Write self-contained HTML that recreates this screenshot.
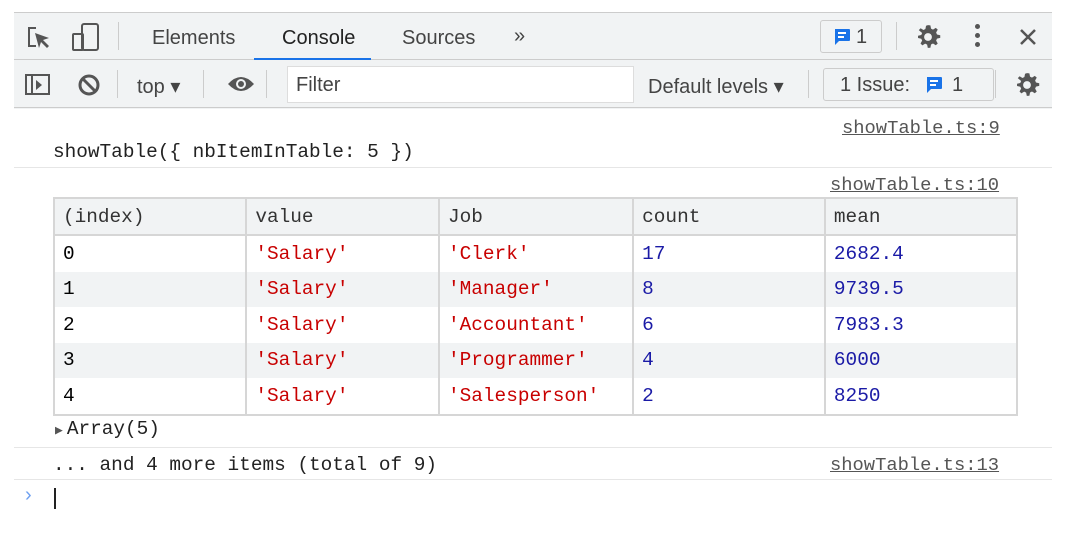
<!DOCTYPE html><html><head><style>
body{margin:0;width:1077px;height:537px;background:#fff;position:relative;overflow:hidden;font-family:"Liberation Sans",sans-serif}
.a{position:absolute}
.m{font-family:"Liberation Mono",monospace;font-size:19.4px;color:#222;white-space:pre}
.ui{font-size:20px;color:#444;white-space:pre}
.link{font-family:"Liberation Mono",monospace;font-size:18.8px;color:#555;text-decoration:underline;white-space:pre}
table{border-collapse:collapse;position:absolute;left:53px;top:197px;width:965px;font-family:"Liberation Mono",monospace;font-size:19.4px}
td{border:2px solid #d6d6d6;border-top:none;border-bottom:none;height:35.5px;padding:0 0 0 8px;width:185px;white-space:pre}
tr.h td{background:#f1f3f4;border-top:2px solid #d6d6d6;border-bottom:2px solid #d6d6d6;color:#333;height:35px}
tr.g td{background:#f1f3f4}
tr.l td{border-bottom:2px solid #d6d6d6}
.s{color:#c80000}.n{color:#1a1aa6}
.sep{position:absolute;width:1px;background:#ccc}
</style></head><body>
<svg width="0" height="0" style="position:absolute"><defs><g id="gear"><path d="M12 1l2.2.3.6 3 1.8.9 2.6-1.6 1.8 1.6-1.5 2.7.8 1.8 3 .7v2.4l-3 .7-.8 1.8 1.5 2.7-1.8 1.6-2.6-1.6-1.8.9-.6 3-2.4.1-.6-3-1.8-.9-2.6 1.6-1.7-1.7 1.5-2.6-.8-1.8-3-.7V10.8l3-.7.8-1.8L3.5 5.6 5.2 3.9l2.6 1.6 1.8-.9.6-3z" fill="#555"/><circle cx="12" cy="12" r="3.6" fill="#f1f3f4"/></g></defs></svg>
<div class="a" style="left:14px;top:12px;width:1038px;height:96px;background:#f1f3f4;border-top:1px solid #ccc"></div>
<div class="a" style="left:14px;top:59px;width:1038px;height:1px;background:#ccc"></div>
<div class="a" style="left:14px;top:107px;width:1038px;height:1px;background:#ccc"></div>
<svg class="a" style="left:26px;top:24px" width="28" height="28" viewBox="0 0 28 28"><path d="M10 4H3v18h7" fill="none" stroke="#555" stroke-width="2"/><path d="M9 9l14 5-6 2 6 6-2 2-6-6-2 6z" fill="#555"/></svg>
<svg class="a" style="left:70px;top:22px" width="32" height="30" viewBox="0 0 32 30"><rect x="12" y="2" width="16" height="26" rx="2" fill="none" stroke="#555" stroke-width="2"/><rect x="3" y="12" width="10" height="16" rx="1" fill="none" stroke="#555" stroke-width="2"/></svg>
<div class="sep" style="left:118px;top:22px;height:28px"></div>
<div class="a ui" style="left:152px;top:27px">Elements</div>
<div class="a ui" style="left:282px;top:27px;color:#222">Console</div>
<div class="a" style="left:254px;top:58px;width:117px;height:2px;background:#1a73e8"></div>
<div class="a ui" style="left:402px;top:27px">Sources</div>
<div class="a ui" style="left:514px;top:25px">»</div>
<div class="a" style="left:820px;top:20px;width:60px;height:31px;border:1px solid #ccc;border-radius:3px"></div>
<svg class="a" style="left:832px;top:27px" width="20" height="20" viewBox="0 0 20 20"><path d="M3 2h14a1 1 0 011 1v10a1 1 0 01-1 1H7l-4 4z" fill="#1a73e8"/><path d="M6 6h8M6 10h6" stroke="#fff" stroke-width="2"/></svg>
<div class="a ui" style="left:856px;top:26px">1</div>
<div class="sep" style="left:896px;top:22px;height:28px"></div>
<svg class="a" style="left:915px;top:24px" width="26" height="26" viewBox="0 0 24 24"><use href="#gear"/></svg>
<div class="a" style="left:975px;top:24px;width:6px">
<div style="width:5px;height:5px;border-radius:50%;background:#555;margin-bottom:4px"></div><div style="width:5px;height:5px;border-radius:50%;background:#555;margin-bottom:4px"></div><div style="width:5px;height:5px;border-radius:50%;background:#555"></div></div>
<svg class="a" style="left:1018px;top:27px" width="20" height="20"><path d="M3 3l14 14M17 3L3 17" stroke="#555" stroke-width="2.5"/></svg>
<svg class="a" style="left:24px;top:72px" width="28" height="26"><rect x="2" y="3" width="23" height="19" fill="none" stroke="#555" stroke-width="2"/><path d="M8 3v19" stroke="#555" stroke-width="2"/><path d="M12 8l6 5-6 5z" fill="#555"/></svg>
<svg class="a" style="left:77px;top:73px" width="24" height="24"><circle cx="12" cy="12" r="9" fill="none" stroke="#555" stroke-width="3"/><path d="M6 6l12 12" stroke="#555" stroke-width="3"/></svg>
<div class="sep" style="left:117px;top:70px;height:28px"></div>
<div class="a ui" style="left:137px;top:74px">top ▾</div>
<div class="sep" style="left:203px;top:70px;height:28px"></div>
<svg class="a" style="left:226px;top:74px" width="30" height="20"><path d="M2 10Q15-4 28 10Q15 24 2 10z" fill="#555"/><circle cx="15" cy="10" r="5" fill="#f1f3f4"/><circle cx="15" cy="10" r="3" fill="#555"/></svg>
<div class="sep" style="left:266px;top:70px;height:28px"></div>
<div class="a" style="left:287px;top:66px;width:345px;height:35px;background:#fff;border:1px solid #ddd"></div>
<div class="a ui" style="left:296px;top:74px">Filter</div>
<div class="a ui" style="left:648px;top:74px">Default levels ▾</div>
<div class="sep" style="left:808px;top:70px;height:28px"></div>
<div class="a" style="left:823px;top:68px;width:169px;height:31px;border:1px solid #ccc;border-radius:3px"></div>
<div class="a ui" style="left:840px;top:74px">1 Issue:</div>
<svg class="a" style="left:924px;top:75px" width="20" height="20" viewBox="0 0 20 20"><path d="M3 2h14a1 1 0 011 1v10a1 1 0 01-1 1H7l-4 4z" fill="#1a73e8"/><path d="M6 6h8M6 10h6" stroke="#fff" stroke-width="2"/></svg>
<div class="a ui" style="left:952px;top:74px">1</div>
<div class="sep" style="left:995px;top:70px;height:28px"></div>
<svg class="a" style="left:1014px;top:72px" width="26" height="26" viewBox="0 0 24 24"><use href="#gear"/></svg>
<div class="a link" style="left:842px;top:117px">showTable.ts:9</div>
<div class="a m" style="left:53px;top:141px">showTable({ nbItemInTable: 5 })</div>
<div class="a" style="left:14px;top:167px;width:1038px;height:1px;background:#e6e6e6"></div>
<div class="a link" style="left:830px;top:174px">showTable.ts:10</div>
<table>
<tr class="h"><td>(index)</td><td>value</td><td>Job</td><td>count</td><td>mean</td></tr>
<tr><td>0</td><td class="s">'Salary'</td><td class="s">'Clerk'</td><td class="n">17</td><td class="n">2682.4</td></tr>
<tr class="g"><td>1</td><td class="s">'Salary'</td><td class="s">'Manager'</td><td class="n">8</td><td class="n">9739.5</td></tr>
<tr><td>2</td><td class="s">'Salary'</td><td class="s">'Accountant'</td><td class="n">6</td><td class="n">7983.3</td></tr>
<tr class="g"><td>3</td><td class="s">'Salary'</td><td class="s">'Programmer'</td><td class="n">4</td><td class="n">6000</td></tr>
<tr class="l"><td>4</td><td class="s">'Salary'</td><td class="s">'Salesperson'</td><td class="n">2</td><td class="n">8250</td></tr>
</table>
<div class="a m" style="left:55px;top:418px"><span style="font-size:13px;color:#555;margin-right:4px">▶</span>Array(5)</div>
<div class="a" style="left:14px;top:447px;width:1038px;height:1px;background:#e6e6e6"></div>
<div class="a m" style="left:53px;top:454px">... and 4 more items (total of 9)</div>
<div class="a link" style="left:830px;top:454px">showTable.ts:13</div>
<div class="a" style="left:14px;top:479px;width:1038px;height:1px;background:#e6e6e6"></div>
<div class="a" style="left:25px;top:484px;color:#6ea0f0;font-size:20px">›</div>
<div class="a" style="left:54px;top:488px;width:2px;height:21px;background:#222"></div>
</body></html>
